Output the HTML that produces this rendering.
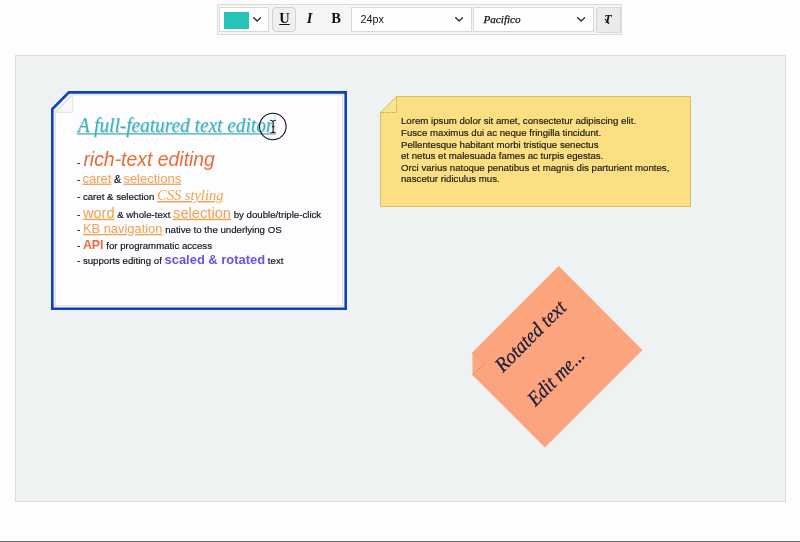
<!DOCTYPE html>
<html lang="en">
<head>
<meta charset="utf-8">
<title>A full-featured text editor</title>
<style>
  html, body { margin: 0; padding: 0; }
  body {
    width: 800px; height: 542px; overflow: hidden; position: relative;
    background: #fefdfe;
    font-family: "Liberation Sans", sans-serif;
  }
  /* ---------- toolbar ---------- */
  .toolbar {
    position: absolute; left: 217px; top: 4px; width: 405px; height: 30.5px;
    box-sizing: border-box; background: #f6f5f6; border: 1px solid #dcdbdc;
  }
  .toolbar > * { position: absolute; box-sizing: border-box; }
  .toolbar, .canvas { will-change: transform; }
  .picker, .select {
    top: 2px; height: 25px; background: #fefefe; border: 1px solid #d9d8d9;
  }
  .picker { left: 1px; width: 50px; }
  .swatch { position: absolute; left: 4px; top: 4px; width: 25px; height: 17px; background: #24c4b6; }
  .chev { position: absolute; top: 9.2px; width: 8.4px; height: 4.9px; }
  .btn {
    top: 2px; width: 24px; height: 25px; text-align: center;
    font-family: "Liberation Serif", serif; font-size: 14.5px; line-height: 21px; color: #111;
  }
  .btn.on { background: #f0eff0; border: 1px solid #d3d2d3; border-radius: 4px; }
  .btn.flat { background: #ebebeb; border: 1px solid #d8d7d8; border-radius: 2px; height: 26px; top: 1.5px; }
  .select { font-size: 10.8px; line-height: 23.4px; color: #111; padding-left: 8.5px; }
  .select.size { left: 133px; width: 121px; }
  .select.font { left: 255.4px; -webkit-text-stroke: 0.25px #111; width: 121px; font-family: "Liberation Serif", serif; font-style: italic; font-size: 11.2px; padding-left: 9px; line-height: 23px; }
  /* ---------- canvas ---------- */
  .canvas {
    position: absolute; left: 15px; top: 55px; width: 771px; height: 447px;
    box-sizing: border-box; background: #eef2f3; border: 1px solid #dddcde;
  }
  .canvas svg { position: absolute; left: -16px; top: -56px; }
  .n1 text { stroke: #15151d; stroke-width: 0.18px; }
  .n1 tspan { stroke: none; }
  .n1 .o { fill: #f3a04e; text-decoration: underline; }
  .n1 .r { fill: #e96c36; }
  .n1 .p { fill: #6655e0; }
  .n1 .i { font-style: italic; }
  .n1 .b { font-weight: bold; }
  .n1 .s { font-family: "Liberation Serif", serif; font-style: italic; }
  .n1 text.t { stroke: none; }
  .n2 text { stroke: #1c1a16; stroke-width: 0.18px; }
  .bottomline { position: absolute; left: 0; top: 541px; width: 800px; height: 1px; background: #6b6b6b; }
</style>
</head>
<body>

<div class="toolbar">
  <div class="picker">
    <div class="swatch"></div>
    <svg class="chev" style="left:32.6px" viewBox="0 0 8.4 4.9"><path d="M0.7 0.7 L4.2 4.1 L7.7 0.7" fill="none" stroke="#2b2b33" stroke-width="1.4" stroke-linecap="round" stroke-linejoin="round"/></svg>
  </div>
  <div class="btn on" style="left:54px; padding-left:1px"><b><u>U</u></b></div>
  <div class="btn" style="left:79.7px; padding-top:1px"><b><i>I</i></b></div>
  <div class="btn" style="left:106px; padding-top:1px"><b>B</b></div>
  <div class="select size">24px
    <svg class="chev" style="left:102.7px" viewBox="0 0 8.4 4.9"><path d="M0.7 0.7 L4.2 4.1 L7.7 0.7" fill="none" stroke="#2b2b33" stroke-width="1.4" stroke-linecap="round" stroke-linejoin="round"/></svg>
  </div>
  <div class="select font">Pacifico
    <svg class="chev" style="left:102.7px" viewBox="0 0 8.4 4.9"><path d="M0.7 0.7 L4.2 4.1 L7.7 0.7" fill="none" stroke="#2b2b33" stroke-width="1.4" stroke-linecap="round" stroke-linejoin="round"/></svg>
  </div>
  <div class="btn flat" style="left:377.8px; width:25.2px">
    <svg width="22" height="23" viewBox="0 0 22 23" style="position:absolute;left:0;top:0"><text x="7" y="15" font-family="'Liberation Serif', serif" font-weight="bold" font-style="italic" font-size="12.5" fill="#111">T</text><path d="M8 11 L11.8 16" stroke="#111" stroke-width="1.1" fill="none"/></svg>
  </div>
</div>

<div class="canvas">
<svg width="800" height="542" viewBox="0 0 800 542">
  <!-- note 1 (selected) -->
  <g>
    <path d="M72.8 95 H342.5 V305.5 H55.5 V112.3 Z" fill="#fdfcfe" stroke="#e3e2e6" stroke-width="1"/>
    <path d="M55.5 112.3 H72.8 V95 Z" fill="#f8f7f9" stroke="#dcdbdf" stroke-width="0.9"/>
    <path d="M68.9 92.4 H345.7 V308.7 H52.3 V109 Z" fill="none" stroke="#0f41be" stroke-width="2.6" stroke-linejoin="miter"/>
    <g class="n1" font-family="'Liberation Sans', sans-serif" font-size="9.67" fill="#15151d">
      <text class="t" x="78.6" y="133.3" font-family="'Liberation Serif', serif" font-style="italic" font-size="20.3" fill="#cdd0d8" style="stroke:none" textLength="195.5" lengthAdjust="spacingAndGlyphs">A full-featured text editor</text>
      <line x1="77.5" y1="134.6" x2="275.5" y2="134.6" stroke="#cdd0d8" stroke-width="1"/>
      <text class="t" x="77.8" y="132.4" font-family="'Liberation Serif', serif" font-style="italic" font-size="20.3" fill="#2fb9c0" style="stroke:none" textLength="195.5" lengthAdjust="spacingAndGlyphs">A full-featured text editor</text>
      <line x1="77" y1="133.7" x2="275" y2="133.7" stroke="#2fb9c0" stroke-width="1.1"/>
      <text x="77" y="166">- <tspan class="r i" font-size="19.4" dx="0.5">rich-text editing</tspan></text>
      <text x="77" y="182.6">- <tspan class="o" font-size="13" dx="-0.5">caret</tspan> <tspan font-size="10.8" style="stroke:#15151d">&amp;</tspan> <tspan class="o" font-size="13" dx="-0.5">selections</tspan></text>
      <text x="77" y="200">- caret &amp; selection <tspan class="o s" font-size="14.5">CSS styling</tspan></text>
      <text x="77" y="217.7">- <tspan class="o" font-size="14.6">word</tspan> &amp; whole-text <tspan class="o" font-size="14.7">selection</tspan> by double/triple-click</text>
      <text x="77" y="233">- <tspan class="o" font-size="12.9">KB navigation</tspan> native to the underlying OS</text>
      <text x="77" y="248.6">- <tspan class="r b" font-size="12.4">API</tspan> for programmatic access</text>
      <text x="77" y="264.4">- supports editing of <tspan class="p b" font-size="12.95">scaled &amp; rotated</tspan> text</text>
    </g>
    <!-- caret + mouse pointer -->
    <line x1="274.8" y1="115" x2="274.8" y2="134" stroke="#b5e0ee" stroke-width="1"/>
    <circle cx="272.8" cy="126.5" r="13.3" fill="none" stroke="#111" stroke-width="1.1"/>
    <path d="M270.3 120.3 Q272.6 120.3 273.1 121.6 Q273.6 120.3 275.9 120.3 M273.1 121.6 V131.7 M270.3 133 Q272.6 133 273.1 131.7 Q273.6 133 275.9 133" fill="none" stroke="#fff" stroke-width="2.2" opacity="0.8"/>
    <path d="M270.3 120.3 Q272.6 120.3 273.1 121.6 Q273.6 120.3 275.9 120.3 M273.1 121.6 V131.7 M270.3 133 Q272.6 133 273.1 131.7 Q273.6 133 275.9 133 M271.8 126.8 H274.4" fill="none" stroke="#111" stroke-width="1.1"/>
  </g>

  <!-- note 2 (yellow) -->
  <g>
    <path d="M396.5 96.5 H690.5 V206.5 H380.5 V112.5 Z" fill="#fbdf82" stroke="#d9bd62" stroke-width="1"/>
    <path d="M380.5 112.5 H396.5 V96.5 Z" fill="#fce38e"/>
    <path d="M380.5 112.5 H396.5 V96.5" fill="none" stroke="#a8904a" stroke-width="0.7" stroke-dasharray="1.4 0.9"/>
    <path d="M380.5 112.5 L396.5 96.5" fill="none" stroke="#d9bd62" stroke-width="1"/>
    <g class="n2" font-family="'Liberation Sans', sans-serif" font-size="9.67" fill="#1c1a16">
      <text x="401" y="124.4">Lorem ipsum dolor sit amet, consectetur adipiscing elit.</text>
      <text x="401" y="135.9">Fusce maximus dui ac neque fringilla tincidunt.</text>
      <text x="401" y="147.5">Pellentesque habitant morbi tristique senectus</text>
      <text x="401" y="159">et netus et malesuada fames ac turpis egestas.</text>
      <text x="401" y="170.6">Orci varius natoque penatibus et magnis dis parturient montes,</text>
      <text x="401" y="182.1">nascetur ridiculus mus.</text>
    </g>
  </g>

  <!-- note 3 (rotated) -->
  <g transform="translate(551.8 356.8) rotate(-45)">
    <path d="M-52.7 -59.25 H69 V59.25 H-69 V-42.95 Z" fill="#fba47e"/>
    <path d="M-69 -42.95 H-52.7 V-59.25 Z" fill="#fca982"/>
    <path d="M-69 -42.95 H-52.7" fill="none" stroke="#b8684a" stroke-width="0.6" stroke-dasharray="1.4 0.8"/>
    <path d="M-52.7 -42.95 V-59.25" fill="none" stroke="#e58d66" stroke-width="0.6" stroke-dasharray="1.4 0.8"/>
    <g font-family="'Liberation Serif', serif" font-style="italic" font-size="20.5" fill="#161b36" stroke="#161b36" stroke-width="0.25">
      <text x="-46" y="-23" textLength="91" lengthAdjust="spacingAndGlyphs">Rotated text</text>
      <text x="-47" y="24" textLength="71" lengthAdjust="spacingAndGlyphs">Edit me...</text>
    </g>
  </g>
</svg>
</div>

<div class="bottomline"></div>
</body>
</html>
